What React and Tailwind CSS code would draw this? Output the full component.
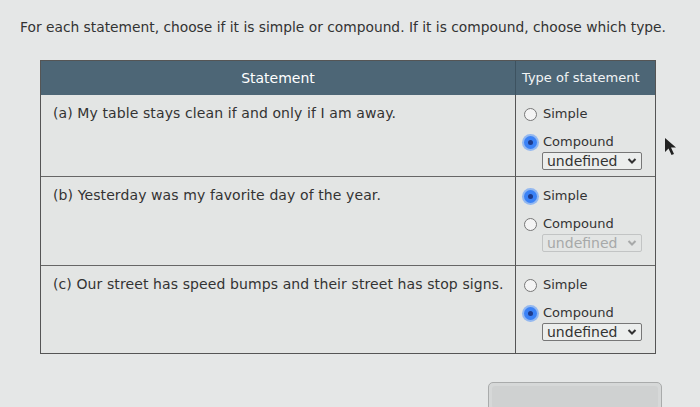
import React from "react";

const rows = [
  { label: "(a) My table stays clean if and only if I am away.", choice: "compound", h: "h-[81px]" },
  { label: "(b) Yesterday was my favorite day of the year.", choice: "simple", h: "h-[89px]" },
  { label: "(c) Our street has speed bumps and their street has stop signs.", choice: "compound", h: "h-[88px]" },
];

function Radio({ checked }) {
  return checked ? (
    <span className="w-[13px] h-[13px] rounded-full bg-[#3b82f6] ring-2 ring-[#93b8f0] flex items-center justify-center">
      <span className="w-[5px] h-[5px] rounded-full bg-[#1e3a8a]" />
    </span>
  ) : (
    <span className="w-[13px] h-[13px] rounded-full border border-[#777] bg-[#f4f4f4]" />
  );
}

function Select({ disabled }) {
  return (
    <div
      className={`ml-[18px] mt-[1px] w-[100px] h-[18px] flex items-center justify-between pl-[4px] pr-[4px] border rounded-[2px] ${
        disabled ? "border-[#c2c4c4] text-[#a7a9a9]" : "border-[#777] text-[#333] bg-[#eceeed]"
      }`}
    >
      <span className="text-[14px] leading-none">undefined</span>
      <svg width="10" height="8" viewBox="0 0 10 8">
        <path d="M1.5 2 L5 5.5 L8.5 2" fill="none" stroke={disabled ? "#a7a9a9" : "#333"} strokeWidth="2" />
      </svg>
    </div>
  );
}

export default function App() {
  return (
    <div
      className="relative w-[700px] h-[407px] overflow-hidden bg-[#e5e7e7] text-[#333]"
      style={{ fontFamily: "'DejaVu Sans', Verdana, sans-serif" }}
    >
      <p className="pt-[18px] pl-[20px] text-[13.8px] leading-[18px]">
        For each statement, choose if it is simple or compound. If it is compound, choose which type.
      </p>

      <div className="ml-[40px] mt-[24px] w-[616px] border border-[#555] grid grid-cols-[475px_139px]">
        <div className="h-[34px] bg-[#4d6676] text-white text-[14px] flex items-center justify-center border-r border-[#3d5260]">
          Statement
        </div>
        <div className="h-[34px] bg-[#4d6676] text-[#f2f4f5] text-[13px] flex items-center pl-[6px]">
          Type of statement
        </div>

        {rows.map((r, i) => (
          <React.Fragment key={i}>
            <div className={`${r.h} bg-[#e3e5e4] border-r border-[#555] ${i > 0 ? "border-t" : ""} border-t-[#666] pl-[12px] pt-[8px] text-[14px] tracking-[0.1px]`}>
              {r.label}
            </div>
            <div className={`${r.h} bg-[#e3e5e4] ${i > 0 ? "border-t" : ""} border-t-[#666] pl-[8px] pt-[10px] text-[13px]`}>
              <div className="flex items-center gap-[6px] h-[18px]">
                <Radio checked={r.choice === "simple"} />
                <span>Simple</span>
              </div>
              <div className="flex items-center gap-[6px] h-[18px] mt-[10px]">
                <Radio checked={r.choice === "compound"} />
                <span>Compound</span>
              </div>
              <Select disabled={r.choice === "simple"} />
            </div>
          </React.Fragment>
        ))}
      </div>

      <div className="flex justify-end pr-[38px] mt-[28px]">
        <div className="w-[174px] h-[30px] rounded-[5px] border border-[#a9abab] bg-[#d6d8d8] p-[3px]">
          <div className="w-full h-full rounded-[3px] bg-[#cfd1d1]" />
        </div>
      </div>

      <svg className="absolute left-[664px] top-[137px]" width="16" height="20" viewBox="0 0 16 20">
        <path d="M1 1 L1 15 L4.5 11.5 L7.5 18 L10 17 L7 10.5 L12 10.5 Z" fill="#222" />
      </svg>
    </div>
  );
}
